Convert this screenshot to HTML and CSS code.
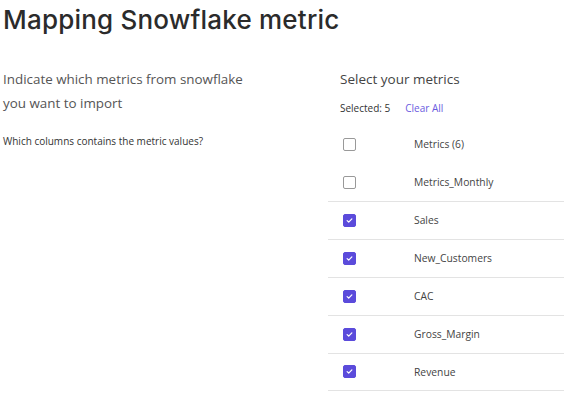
FILE: index.html
```html
<!DOCTYPE html>
<html>
<head>
<meta charset="utf-8">
<link rel="stylesheet" href="styles.css">
</head>
<body>
<h1 class="title">Mapping Snowflake metric</h1>
<div class="main">
  <div class="left">
    <p class="lead">Indicate which metrics from snowflake<br>you want to import</p>
    <p class="question">Which columns contains the metric values?</p>
  </div>
  <div class="right">
    <h2 class="sub">Select your metrics</h2>
    <div class="summary"><span>Selected: 5</span><a class="clear">Clear All</a></div>
    <div class="list">
      <div class="row"><span class="cb"></span><span class="label">Metrics (6)</span></div>
      <div class="row"><span class="cb"></span><span class="label">Metrics_Monthly</span></div>
      <div class="row sep"><span class="cb on"><svg viewBox="0 0 14 14"><path d="M4 7.2 L6 9 L10 5" /></svg></span><span class="label">Sales</span></div>
      <div class="row sep"><span class="cb on"><svg viewBox="0 0 14 14"><path d="M4 7.2 L6 9 L10 5" /></svg></span><span class="label">New_Customers</span></div>
      <div class="row sep"><span class="cb on"><svg viewBox="0 0 14 14"><path d="M4 7.2 L6 9 L10 5" /></svg></span><span class="label">CAC</span></div>
      <div class="row sep"><span class="cb on"><svg viewBox="0 0 14 14"><path d="M4 7.2 L6 9 L10 5" /></svg></span><span class="label">Gross_Margin</span></div>
      <div class="row sep"><span class="cb on"><svg viewBox="0 0 14 14"><path d="M4 7.2 L6 9 L10 5" /></svg></span><span class="label">Revenue</span></div>
    </div>
  </div>
</div>
</body>
</html>
```
FILE: styles.css
```css
html, body { margin: 0; padding: 0; background: #fff; }
body {
  font-family: "Open Sans", "Noto Sans", sans-serif;
  color: #333;
  padding: 0 0 0 3px;
  overflow: hidden;
}
.title {
  margin: 0;
  padding-top: 2px;
  font-family: "Inter", "Noto Sans", sans-serif;
  font-weight: 500;
  font-size: 26px;
  line-height: 36px;
  color: #2b2b2b;
  letter-spacing: 0.2px;
}
.main {
  display: flex;
  margin-top: 29px;
}
.left {
  width: 325px;
}
.lead {
  margin: 0;
  font-size: 13.4px;
  line-height: 24px;
  color: #555;
}
.question {
  margin: 19px 0 0;
  font-size: 10px;
  line-height: 14px;
  color: #333;
}
.right {
  flex: 1;
}
.sub {
  margin: 0 0 0 12px;
  font-weight: 400;
  font-size: 13.5px;
  line-height: 24px;
  color: #444;
}
.summary {
  margin: 10px 0 0 12px;
  font-size: 10px;
  line-height: 14px;
  color: #333;
  display: flex;
  gap: 15px;
}
.clear { color: #6a5ae0; }
.list { margin-top: 10px; }
.row {
  box-sizing: border-box;
  height: 38px;
  display: flex;
  align-items: center;
  font-size: 10.3px;
  color: #444;
}
.row.sep { border-top: 1px solid #e3e3e3; padding-bottom: 1px; }
.row:last-child { border-bottom: 1px solid #e3e3e3; }
.cb {
  width: 11px;
  height: 11px;
  border: 1px solid #999;
  border-radius: 2px;
  margin-left: 15px;
  margin-right: 58px;
  display: flex;
}
.cb.on {
  background: #5b4bdb;
  border-color: #5b4bdb;
}
.cb svg { width: 11px; height: 11px; }
.cb svg path { fill: none; stroke: #fff; stroke-width: 1.6; stroke-linecap: round; stroke-linejoin: round; }
```
